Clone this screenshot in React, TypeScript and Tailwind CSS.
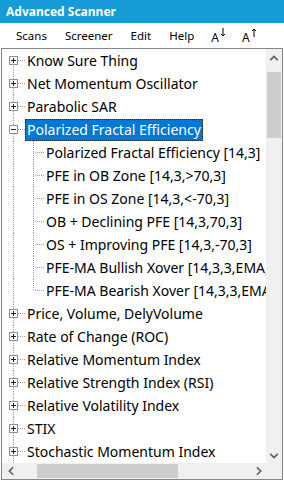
import React from "react";

type Row = { label: string; level: 0 | 1; expanded?: boolean; selected?: boolean; lastChild?: boolean };

const ROWS: Row[] = [
  { label: "Know Sure Thing", level: 0 },
  { label: "Net Momentum Oscillator", level: 0 },
  { label: "Parabolic SAR", level: 0 },
  { label: "Polarized Fractal Efficiency", level: 0, expanded: true, selected: true },
  { label: "Polarized Fractal Efficiency [14,3]", level: 1 },
  { label: "PFE in OB Zone [14,3,>70,3]", level: 1 },
  { label: "PFE in OS Zone [14,3,<-70,3]", level: 1 },
  { label: "OB + Declining PFE [14,3,70,3]", level: 1 },
  { label: "OS + Improving PFE [14,3,-70,3]", level: 1 },
  { label: "PFE-MA Bullish Xover [14,3,3,EMA,70]", level: 1 },
  { label: "PFE-MA Bearish Xover [14,3,3,EMA,-70]", level: 1, lastChild: true },
  { label: "Price, Volume, DelyVolume", level: 0 },
  { label: "Rate of Change (ROC)", level: 0 },
  { label: "Relative Momentum Index", level: 0 },
  { label: "Relative Strength Index (RSI)", level: 0 },
  { label: "Relative Volatility Index", level: 0 },
  { label: "STIX", level: 0 },
  { label: "Stochastic Momentum Index", level: 0 },
];

const dot = { stroke: "#a0a0a0", strokeWidth: 1, strokeDasharray: "1 1" };

function Gutter({ row, first }: { row: Row; first: boolean }) {
  if (row.level === 0) {
    return (
      <svg width="23" height="23" className="shrink-0">
        <line x1="11.5" y1={first ? 11 : 0} x2="11.5" y2="23" {...dot} />
        <line x1="16" y1="11.5" x2="23" y2="11.5" {...dot} />
        <rect x="7.5" y="7.5" width="8" height="8" fill="#fff" stroke="#919191" />
        <path d="M9 11.5H14" stroke="#222" />
        {!row.expanded && <path d="M11.5 9V14" stroke="#222" />}
      </svg>
    );
  }
  return (
    <svg width="42" height="23" className="shrink-0">
      <line x1="11.5" y1="0" x2="11.5" y2="23" {...dot} />
      <line x1="31.5" y1="0" x2="31.5" y2={row.lastChild ? 12 : 23} {...dot} />
      <line x1="33" y1="11.5" x2="42" y2="11.5" {...dot} />
    </svg>
  );
}

function Chevron({ dir }: { dir: "up" | "down" | "left" | "right" }) {
  const d = {
    up: "M4 9.5L7.5 6L11 9.5",
    down: "M4 6.5L7.5 10L11 6.5",
    left: "M9.5 4L6 7.5L9.5 11",
    right: "M6.5 4L10 7.5L6.5 11",
  }[dir];
  return (
    <svg width="16" height="16" viewBox="0 0 15 15">
      <path d={d} fill="none" stroke="#606060" strokeWidth="1.6" />
    </svg>
  );
}

// font size down / up buttons: an "A" with a small arrow beside it
function FontA({ up }: { up?: boolean }) {
  return (
    <span className="flex items-end h-[16px]">
      <span className="text-[12px] leading-none">A</span>
      <svg width="6" height="9" className="self-start ml-[1px]">
        {up ? (
          <path d="M3 1V9M1 3L3 1L5 3" fill="none" stroke="#000" strokeWidth="1" />
        ) : (
          <path d="M3 0V8M1 6L3 8L5 6" fill="none" stroke="#000" strokeWidth="1" />
        )}
      </svg>
    </span>
  );
}

export default function App() {
  return (
    <div className="w-[284px] h-[481px] bg-white flex flex-col overflow-hidden" style={{ fontFamily: '"Noto Sans", "Open Sans", sans-serif' }}>
      <div className="h-[23px] bg-[#179bd7] text-white font-bold text-[12px] flex items-center px-[6px]">
        Advanced Scanner
      </div>
      <div className="h-[25px] flex items-center pl-[16px] text-[11.5px] text-black">
        <span>Scans</span>
        <span className="ml-[18px]">Screener</span>
        <span className="ml-[18px]">Edit</span>
        <span className="ml-[18px]">Help</span>
        <span className="ml-[17px]"><FontA /></span>
        <span className="ml-[16px]"><FontA up /></span>
      </div>
      <div className="ml-[1px] w-[282px] h-[432px] border border-[#828790] grid grid-cols-[264px_16px] grid-rows-[414px_16px]">
        <div className="overflow-hidden text-[14px] text-black">
          {ROWS.map((row, i) => (
            <div key={i} className="h-[23px] flex items-center whitespace-nowrap">
              <Gutter row={row} first={i === 0} />
              <span
                className={
                  row.selected
                    ? "h-[22px] flex items-center px-[1px] bg-[#0078d7] text-white border border-dotted border-[#1c2b3a]"
                    : "px-[2px]"
                }
              >
                {row.label}
              </span>
            </div>
          ))}
        </div>
        <div className="bg-[#f0f0f0] flex flex-col">
          <div className="h-[17px] flex items-center justify-center">
            <Chevron dir="up" />
          </div>
          <div className="h-[6px]" />
          <div className="h-[66px] mx-[1px] bg-[#cdcdcd]" />
          <div className="flex-1" />
          <div className="h-[17px] flex items-center justify-center">
            <Chevron dir="down" />
          </div>
        </div>
        <div className="bg-[#f0f0f0] flex items-center">
          <div className="w-[17px] flex justify-center">
            <Chevron dir="left" />
          </div>
          <div className="w-[18px]" />
          <div className="w-[141px] h-[14px] bg-[#cdcdcd]" />
          <div className="flex-1" />
          <div className="w-[17px] flex justify-center">
            <Chevron dir="right" />
          </div>
        </div>
        <div className="bg-[#f0f0f0]" />
      </div>
    </div>
  );
}
